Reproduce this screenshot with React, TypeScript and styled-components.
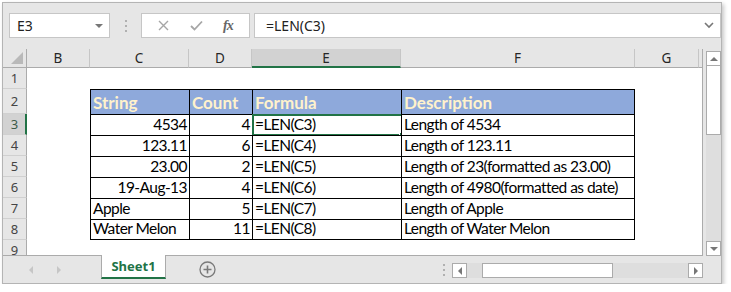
import styled, { createGlobalStyle } from 'styled-components';

const GlobalStyle = createGlobalStyle`
  html, body {
    margin: 0;
    padding: 0;
    background: #ffffff;
  }
  * {
    box-sizing: border-box;
  }
`;

const GREEN = '#217346';
const UI_FONT = `"Noto Sans", "Open Sans", sans-serif`;
const CELL_FONT = `Lato, "Liberation Sans", sans-serif`;

const Window = styled.div`
  margin: 2px 0 0 2px;
  width: 720px;
  height: 282px;
  border: 1px solid #b4b4b4;
  background: #e6e6e6;
  box-shadow: 2px 2px 4px rgba(0, 0, 0, 0.22);
  display: flex;
  flex-direction: column;
  overflow: hidden;
`;

/* ---------- formula bar ---------- */

const FormulaBar = styled.div`
  height: 46px;
  flex: none;
  display: flex;
  align-items: flex-start;
  padding: 10px 3px 0 3px;
`;

const Box = styled.div<{ $w: number }>`
  width: ${(p) => p.$w}px;
  height: 25px;
  background: #ffffff;
  border: 1px solid #c6c6c6;
  display: flex;
  align-items: center;
  flex: none;
`;

const NameBox = styled(Box)`
  margin-left: 3px;
  padding: 0 6px 0 7px;
  justify-content: space-between;
  font-family: ${UI_FONT};
  font-size: 14px;
  color: #222;
`;

const Divider = styled.div`
  width: 31px;
  height: 25px;
  flex: none;
  display: flex;
  align-items: center;
  justify-content: center;
`;

const ButtonBox = styled(Box)`
  justify-content: space-around;
  padding: 0 6px;
`;

const FxLabel = styled.span`
  font-family: "Liberation Serif", serif;
  font-style: italic;
  font-weight: bold;
  font-size: 14px;
  color: #666;
  letter-spacing: -1px;
`;

const FormulaInput = styled(Box)`
  margin-left: 4px;
  padding: 0 6px 0 11px;
  justify-content: space-between;
  font-family: ${UI_FONT};
  font-size: 14px;
  color: #222;
`;

/* ---------- sheet ---------- */

const Main = styled.div`
  height: 207px;
  flex: none;
  display: flex;
`;

const SheetArea = styled.div`
  width: 700px;
  height: 207px;
  border-right: 1px solid #ababab;
  border-bottom: 1px solid #ababab;
  background: #ffffff;
  overflow: hidden;
  display: grid;
  grid-template-columns: 24px 63px 99px 63px 149px 234px 64px 1fr;
  grid-template-rows: 19px 21px 25px repeat(6, 21px) 21px;
`;

const Corner = styled.div`
  position: relative;
  background: #e6e6e6;
  border-right: 1px solid #ababab;
  border-bottom: 1px solid #ababab;
`;

const CornerTriangle = styled.div`
  position: absolute;
  right: 3px;
  bottom: 3px;
  width: 0;
  height: 0;
  border-left: 12px solid transparent;
  border-bottom: 12px solid #b9b9b9;
`;

const ColHead = styled.div<{ $active?: boolean; $last?: boolean }>`
  background: ${(p) => (p.$active ? '#d2d2d2' : '#e6e6e6')};
  border-right: ${(p) => (p.$last ? 'none' : '1px solid #c6c6c6')};
  border-bottom: ${(p) => (p.$active ? `2px solid ${GREEN}` : '1px solid #ababab')};
  display: flex;
  align-items: center;
  justify-content: center;
  font-family: ${UI_FONT};
  font-size: 13.5px;
  color: #262626;
  padding-top: ${(p) => (p.$active ? '1px' : '0')};
`;

const RowHead = styled.div<{ $active?: boolean }>`
  background: ${(p) => (p.$active ? '#d2d2d2' : '#e6e6e6')};
  border-right: ${(p) => (p.$active ? `2px solid ${GREEN}` : '1px solid #ababab')};
  border-bottom: 1px solid #d0d0d0;
  display: flex;
  align-items: center;
  justify-content: center;
  font-family: ${UI_FONT};
  font-size: 13px;
  color: ${(p) => (p.$active ? '#3b5a48' : '#444')};
  padding-left: ${(p) => (p.$active ? '1px' : '0')};
`;

const Blank = styled.div``;

const Cell = styled.div<{
  $align?: 'left' | 'right';
  $head?: boolean;
  $lastCol?: boolean;
  $lastRow?: boolean;
}>`
  position: relative;
  background: ${(p) => (p.$head ? '#8ea9db' : '#ffffff')};
  border-left: 1px solid #000;
  border-top: 1px solid #000;
  border-right: ${(p) => (p.$lastCol ? '1px solid #000' : 'none')};
  border-bottom: ${(p) => (p.$lastRow ? '1px solid #000' : 'none')};
  display: flex;
  align-items: flex-end;
  justify-content: ${(p) => (p.$align === 'right' ? 'flex-end' : 'flex-start')};
  padding: 0 2px 1px 2px;
  font-family: ${CELL_FONT};
  font-size: ${(p) => (p.$head ? '17px' : '15.5px')};
  letter-spacing: ${(p) => (p.$head ? '0' : '-0.55px')};
  font-weight: ${(p) => (p.$head ? 'bold' : 'normal')};
  color: ${(p) => (p.$head ? '#fff2cc' : '#000')};
  white-space: nowrap;
  line-height: 1.2;
`;

const Selection = styled.div`
  position: absolute;
  top: -1px;
  left: -1px;
  right: -2px;
  bottom: -1px;
  border: 2px solid ${GREEN};
  pointer-events: none;
`;

const FillHandle = styled.div`
  position: absolute;
  right: -4px;
  bottom: -4px;
  width: 6px;
  height: 6px;
  background: ${GREEN};
  border: 1px solid #ffffff;
`;

/* ---------- scrollbars ---------- */

const VScrollWrap = styled.div`
  flex: 1;
  padding: 2px 0 0 3px;
  display: flex;
`;

const VScroll = styled.div`
  width: 15px;
  display: flex;
  flex-direction: column;
  background: #dedede;
`;

const ArrowButton = styled.div<{ $size: number }>`
  width: ${(p) => p.$size}px;
  height: ${(p) => p.$size}px;
  flex: none;
  background: #ffffff;
  border: 1px solid #ababab;
  display: flex;
  align-items: center;
  justify-content: center;
`;

const Thumb = styled.div<{ $vertical?: boolean; $length: number }>`
  flex: none;
  ${(p) => (p.$vertical ? `height: ${p.$length}px;` : `width: ${p.$length}px;`)}
  background: #ffffff;
  border: 1px solid #ababab;
  ${(p) => (p.$vertical ? 'border-top: none;' : '')}
`;

const Track = styled.div<{ $fixed?: number }>`
  ${(p) => (p.$fixed ? `flex: none; width: ${p.$fixed}px;` : 'flex: 1;')}
`;

const Tri = styled.div<{ $dir: 'up' | 'down' | 'left' | 'right'; $color?: string; $s?: number }>`
  width: 0;
  height: 0;
  ${(p) => {
    const s = p.$s ?? 4;
    const c = p.$color ?? '#777';
    switch (p.$dir) {
      case 'up':
        return `border-left:${s}px solid transparent;border-right:${s}px solid transparent;border-bottom:${s}px solid ${c};`;
      case 'down':
        return `border-left:${s}px solid transparent;border-right:${s}px solid transparent;border-top:${s}px solid ${c};`;
      case 'left':
        return `border-top:${s}px solid transparent;border-bottom:${s}px solid transparent;border-right:${s}px solid ${c};`;
      default:
        return `border-top:${s}px solid transparent;border-bottom:${s}px solid transparent;border-left:${s}px solid ${c};`;
    }
  }}
`;

/* ---------- tab bar ---------- */

const TabBar = styled.div`
  flex: 1;
  display: flex;
  align-items: flex-start;
`;

const TabNav = styled.div`
  width: 98px;
  height: 27px;
  display: flex;
  align-items: center;
  padding-left: 26px;
  gap: 24px;
`;

const Tab = styled.div`
  width: 65px;
  height: 24px;
  background: #ffffff;
  border-left: 1px solid #ababab;
  border-right: 1px solid #ababab;
  border-bottom: 2px solid ${GREEN};
  margin-top: -1px;
  display: flex;
  align-items: center;
  justify-content: center;
  font-family: ${UI_FONT};
  font-size: 13px;
  font-weight: bold;
  color: ${GREEN};
`;

const AddSheet = styled.div`
  width: 82px;
  height: 27px;
  display: flex;
  align-items: center;
  justify-content: center;
`;

const Spacer = styled.div`
  flex: 1;
`;

const SplitDots = styled.div`
  width: 16px;
  height: 27px;
  display: flex;
  align-items: center;
  justify-content: center;
`;

const HScroll = styled.div`
  width: 251px;
  height: 15px;
  margin-top: 7px;
  display: flex;
  background: #dedede;
`;

const TabBarEnd = styled.div`
  width: 18px;
`;

const DOTS = (
  <svg width="4" height="12" viewBox="0 0 4 12">
    <rect x="1" y="0" width="2" height="2" fill="#b0b0b0" />
    <rect x="1" y="5" width="2" height="2" fill="#b0b0b0" />
    <rect x="1" y="10" width="2" height="2" fill="#b0b0b0" />
  </svg>
);

type Align = 'left' | 'right';

const HEADERS = ['String', 'Count', 'Formula', 'Description'];

const ROWS: { c: string; cAlign: Align; d: string; e: string; f: string }[] = [
  { c: '4534', cAlign: 'right', d: '4', e: '=LEN(C3)', f: 'Length of 4534' },
  { c: '123.11', cAlign: 'right', d: '6', e: '=LEN(C4)', f: 'Length of 123.11' },
  { c: '23.00', cAlign: 'right', d: '2', e: '=LEN(C5)', f: 'Length of 23(formatted as 23.00)' },
  { c: '19-Aug-13', cAlign: 'right', d: '4', e: '=LEN(C6)', f: 'Length of 4980(formatted as date)' },
  { c: 'Apple', cAlign: 'left', d: '5', e: '=LEN(C7)', f: 'Length of Apple' },
  { c: 'Water Melon', cAlign: 'left', d: '11', e: '=LEN(C8)', f: 'Length of Water Melon' },
];

const COLS = ['B', 'C', 'D', 'E', 'F', 'G'];

export default function App() {
  return (
    <>
      <GlobalStyle />
      <Window>
        <FormulaBar>
          <NameBox $w={101}>
            <span>E3</span>
            <Tri $dir="down" $s={4} $color="#777" />
          </NameBox>
          <Divider>{DOTS}</Divider>
          <ButtonBox $w={109}>
            <svg width="11" height="11" viewBox="0 0 11 11">
              <path d="M1 1 L10 10 M10 1 L1 10" stroke="#a6a6a6" strokeWidth="1.4" />
            </svg>
            <svg width="13" height="11" viewBox="0 0 13 11">
              <path d="M1 6 L4.5 9.5 L12 1.5" stroke="#a6a6a6" strokeWidth="1.8" fill="none" />
            </svg>
            <FxLabel>fx</FxLabel>
          </ButtonBox>
          <FormulaInput $w={467}>
            <span>=LEN(C3)</span>
            <svg width="10" height="7" viewBox="0 0 10 7">
              <path d="M1 1 L5 5 L9 1" stroke="#777" strokeWidth="1.6" fill="none" />
            </svg>
          </FormulaInput>
        </FormulaBar>

        <Main>
          <SheetArea>
            <Corner>
              <CornerTriangle />
            </Corner>
            {COLS.map((c) => (
              <ColHead key={c} $active={c === 'E'}>
                {c}
              </ColHead>
            ))}
            <ColHead $last />

            {/* row 1 */}
            <RowHead>1</RowHead>
            {COLS.map((c) => (
              <Blank key={c} />
            ))}
            <Blank />

            {/* row 2: table header */}
            <RowHead>2</RowHead>
            <Blank />
            {HEADERS.map((h, i) => (
              <Cell key={h} $head $lastCol={i === 3}>
                {h}
              </Cell>
            ))}
            <Blank />
            <Blank />

            {ROWS.map((r, i) => {
              const rowNum = i + 3;
              const lastRow = i === ROWS.length - 1;
              return [
                <RowHead key={`h${rowNum}`} $active={rowNum === 3}>
                  {rowNum}
                </RowHead>,
                <Blank key={`b${rowNum}`} />,
                <Cell key={`c${rowNum}`} $align={r.cAlign} $lastRow={lastRow}>
                  {r.c}
                </Cell>,
                <Cell key={`d${rowNum}`} $align="right" $lastRow={lastRow}>
                  {r.d}
                </Cell>,
                <Cell key={`e${rowNum}`} $lastRow={lastRow}>
                  {r.e}
                  {rowNum === 3 && (
                    <Selection>
                      <FillHandle />
                    </Selection>
                  )}
                </Cell>,
                <Cell key={`f${rowNum}`} $lastCol $lastRow={lastRow}>
                  {r.f}
                </Cell>,
                <Blank key={`g${rowNum}`} />,
                <Blank key={`x${rowNum}`} />,
              ];
            })}

            {/* row 9, cut by the bottom of the sheet view */}
            <RowHead>9</RowHead>
          </SheetArea>

          <VScrollWrap>
            <VScroll>
              <ArrowButton $size={15}>
                <Tri $dir="up" $s={4} $color="#777" />
              </ArrowButton>
              <Thumb $vertical $length={69} />
              <Track />
              <ArrowButton $size={15}>
                <Tri $dir="down" $s={4} $color="#777" />
              </ArrowButton>
            </VScroll>
          </VScrollWrap>
        </Main>

        <TabBar>
          <TabNav>
            <Tri $dir="left" $s={4} $color="#c6c6c6" />
            <Tri $dir="right" $s={4} $color="#c6c6c6" />
          </TabNav>
          <Tab>Sheet1</Tab>
          <AddSheet>
            <svg width="17" height="17" viewBox="0 0 17 17">
              <circle cx="8.5" cy="8.5" r="7.5" stroke="#7a7a7a" strokeWidth="1.3" fill="none" />
              <path d="M8.5 4.5 V12.5 M4.5 8.5 H12.5" stroke="#7a7a7a" strokeWidth="1.6" />
            </svg>
          </AddSheet>
          <Spacer />
          <SplitDots>{DOTS}</SplitDots>
          <HScroll>
            <ArrowButton $size={15}>
              <Tri $dir="left" $s={4} $color="#777" />
            </ArrowButton>
            <Track $fixed={15} />
            <Thumb $length={131} />
            <Track />
            <ArrowButton $size={15}>
              <Tri $dir="right" $s={4} $color="#777" />
            </ArrowButton>
          </HScroll>
          <TabBarEnd />
        </TabBar>
      </Window>
    </>
  );
}
